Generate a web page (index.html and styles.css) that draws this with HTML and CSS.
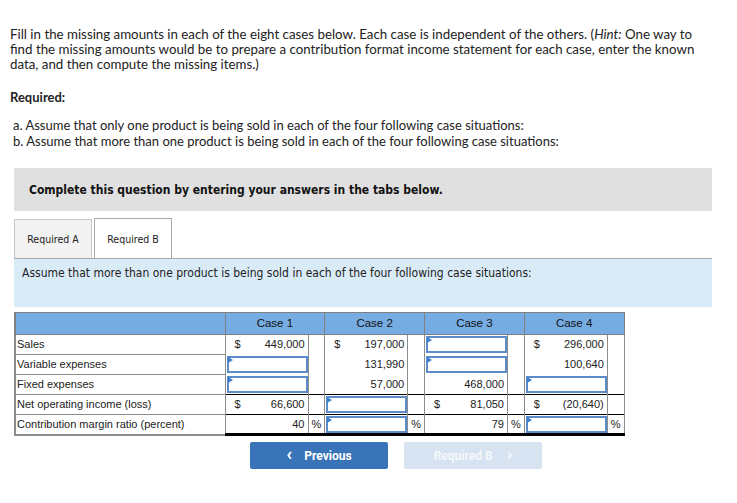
FILE: index.html
```html
<!DOCTYPE html>
<html>
<head>
<meta charset="utf-8">
<link rel="stylesheet" href="styles.css">
</head>
<body>
<div class="page">
  <p class="intro">Fill in the missing amounts in each of the eight cases below. Each case is independent of the others. (<em>Hint:</em> One way to find the missing amounts would be to prepare a contribution format income statement for each case, enter the known data, and then compute the missing items.)</p>
  <p class="req-title">Required:</p>
  <div class="req-list">
    <div>a. Assume that only one product is being sold in each of the four following case situations:</div>
    <div>b. Assume that more than one product is being sold in each of the four following case situations:</div>
  </div>

  <div class="panel">
    <div class="banner">Complete this question by entering your answers in the tabs below.</div>
    <div class="tabs">
      <div class="tab">Required A</div>
      <div class="tab active">Required B</div>
    </div>
    <div class="prompt">Assume that more than one product is being sold in each of the four following case situations:</div>

    <table class="grid">
      <colgroup>
        <col class="c-label">
        <col class="c-main"><col class="c-small">
        <col class="c-main"><col class="c-small">
        <col class="c-main"><col class="c-small">
        <col class="c-main"><col class="c-small">
      </colgroup>
      <thead>
        <tr>
          <th class="lbl"></th>
          <th colspan="2">Case 1</th>
          <th colspan="2">Case 2</th>
          <th colspan="2">Case 3</th>
          <th colspan="2">Case 4</th>
        </tr>
      </thead>
      <tbody>
        <tr>
          <td class="lbl">Sales</td>
          <td class="val"><span class="cur">$</span>449,000</td><td class="sm"></td>
          <td class="val"><span class="cur">$</span>197,000</td><td class="sm"></td>
          <td class="inp"><div class="box"></div></td><td class="sm"></td>
          <td class="val"><span class="cur">$</span>296,000</td><td class="sm"></td>
        </tr>
        <tr>
          <td class="lbl">Variable expenses</td>
          <td class="inp"><div class="box"></div></td><td class="sm"></td>
          <td class="val">131,990</td><td class="sm"></td>
          <td class="inp"><div class="box"></div></td><td class="sm"></td>
          <td class="val">100,640</td><td class="sm"></td>
        </tr>
        <tr>
          <td class="lbl">Fixed expenses</td>
          <td class="inp"><div class="box"></div></td><td class="sm"></td>
          <td class="val">57,000</td><td class="sm"></td>
          <td class="val">468,000</td><td class="sm"></td>
          <td class="inp"><div class="box"></div></td><td class="sm"></td>
        </tr>
        <tr class="total">
          <td class="lbl">Net operating income (loss)</td>
          <td class="val"><span class="cur">$</span>66,600</td><td class="sm"></td>
          <td class="inp"><div class="box"></div></td><td class="sm"></td>
          <td class="val"><span class="cur">$</span>81,050</td><td class="sm"></td>
          <td class="val"><span class="cur">$</span>(20,640)</td><td class="sm"></td>
        </tr>
        <tr class="total last">
          <td class="lbl">Contribution margin ratio (percent)</td>
          <td class="val">40</td><td class="sm pct">%</td>
          <td class="inp"><div class="box"></div></td><td class="sm pct">%</td>
          <td class="val">79</td><td class="sm pct">%</td>
          <td class="inp"><div class="box"></div></td><td class="sm pct">%</td>
        </tr>
      </tbody>
    </table>

    <div class="nav">
      <div class="btn prev"><span class="chev left">&lsaquo;</span>Previous</div>
      <div class="btn next">Required B<span class="chev right">&rsaquo;</span></div>
    </div>
  </div>
</div>
</body>
</html>
```

FILE: styles.css
```css
html, body {
  margin: 0;
  padding: 0;
  background: #ffffff;
}

.page {
  padding: 27px 10px 0 10px;
  font-family: Lato, "Liberation Sans", sans-serif;
  color: #222;
}

.intro {
  margin: 0;
  font-size: 13.3px;
  line-height: 15px;
  width: 700px;
}

.req-title {
  margin: 18px 0 0 0;
  font-weight: bold;
  font-size: 13px;
  line-height: 15px;
}

.req-list {
  margin-top: 13px;
  padding-left: 3px;
  font-size: 13px;
  line-height: 15.5px;
}

.panel {
  margin: 19px 15px 0 4px;
  font-family: "DejaVu Sans Condensed", "DejaVu Sans", sans-serif;
}

.banner {
  background: #e0e0e0;
  height: 43px;
  box-sizing: border-box;
  padding-left: 15px;
  display: flex;
  align-items: center;
  font-weight: bold;
  font-size: 12px;
  color: #111;
}

.tabs {
  margin-top: 7px;
  display: flex;
  gap: 2px;
  align-items: flex-end;
  height: 40px;
  border-bottom: 1px solid #a9a9a9;
}

.tab {
  width: 78px;
  height: 39px;
  box-sizing: border-box;
  border: 1px solid #c8c8c8;
  border-bottom: none;
  background: #f2f2f2;
  font-size: 10.5px;
  color: #222;
  display: flex;
  align-items: center;
  justify-content: center;
}

.tab.active {
  height: 40px;
  background: #ffffff;
  border-color: #a9a9a9;
}

.prompt {
  background: #daebf8;
  height: 48px;
  box-sizing: border-box;
  padding: 7px 0 0 8px;
  font-size: 12px;
  color: #222;
}

.grid {
  margin-top: 5px;
  border-collapse: collapse;
  table-layout: fixed;
  width: 609px;
  font-family: "Liberation Sans", Arial, sans-serif;
  font-size: 11px;
  line-height: 13px;
  color: #222;
}

.c-label { width: 210px; }
.c-main { width: 83px; }
.c-small { width: 16.75px; }

.grid thead tr { height: 22px; }
.grid tbody tr { height: 20px; }

.grid th {
  background: #76ace2;
  padding: 0;
  font-weight: normal;
  font-size: 11.5px;
  color: #111;
  border: 1px solid #808080;
  text-align: center;
}

.grid td {
  padding: 0;
  border-left: 1px solid #8c8c8c;
  border-right: 1px solid #8c8c8c;
}

.grid td.lbl {
  border: 1px solid #8c8c8c;
  border-left-width: 2px;
  padding-left: 1px;
  white-space: nowrap;
}

.grid th.lbl {
  border-left-width: 2px;
}

.grid td.val {
  text-align: right;
  padding-right: 3px;
}

.cur {
  float: left;
  padding-left: 9px;
}

.grid td.pct {
  text-align: center;
}

.grid td.inp {
  padding: 0 0 0 1px;
}

.box {
  position: relative;
  height: 17px;
  box-sizing: border-box;
  border: 2px solid #5b8bc8;
  background: #fff;
}

.box::before {
  content: "";
  position: absolute;
  left: -1px;
  top: -1px;
  border-top: 3px solid transparent;
  border-bottom: 3px solid transparent;
  border-left: 5px solid #3b7fd0;
}

.grid tr.total td:not(.lbl) {
  border-top: 1px solid #000;
}

.grid tr.last td:not(.lbl) {
  border-bottom: 3px solid #000;
}

.grid tr.last td.lbl {
  border-bottom: 2px solid #8c8c8c;
}

.nav {
  margin-top: 6px;
  padding-left: 236px;
  display: flex;
  gap: 16px;
}

.btn {
  width: 138px;
  height: 27px;
  border-radius: 2px;
  display: flex;
  align-items: center;
  justify-content: center;
  font-family: Roboto, "Liberation Sans", sans-serif;
  font-weight: bold;
  font-size: 12px;
}

.btn.prev {
  background: #3a74b8;
  color: #fff;
}

.btn.next {
  background: #d7e3f1;
  color: #f4f7fb;
}

.chev {
  font-size: 19px;
  line-height: 18px;
  margin-top: -3px;
  font-weight: bold;
}

.chev.left { margin-right: 12px; }
.chev.right { margin-left: 14px; }
```
